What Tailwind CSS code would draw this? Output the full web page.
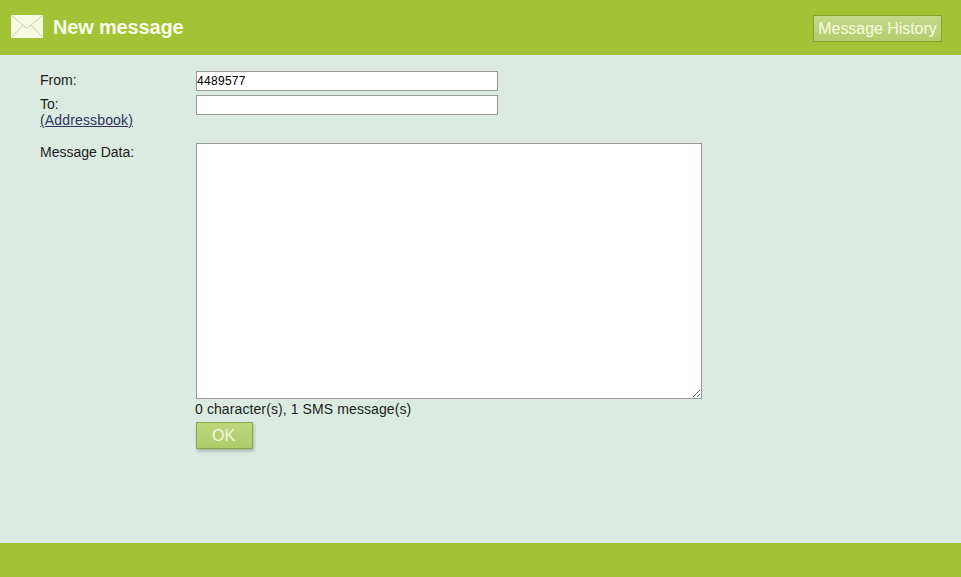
<!DOCTYPE html>
<html lang="en">
<head>
  <meta charset="UTF-8">
  <title>New message</title>
  <script src="https://cdn.jsdelivr.net/npm/@tailwindcss/browser@4"></script>
</head>
<body class="bg-[#dbebe1] font-['Liberation_Sans',Arial,sans-serif] text-[14px] text-[#1c1c1c]">
  <div class="flex flex-col h-[577px] overflow-hidden">
    <!-- Header -->
    <header class="h-[55px] bg-[#a3c236] flex items-center pl-[11px] pr-[19px]">
      <svg width="32" height="23" viewBox="0 0 32 23" class="mr-[10px] -mt-[2px]">
        <rect width="32" height="23" fill="#f7fbe6"/>
        <path d="M0.5 0.5 L16 13.5 L31.5 0.5 M0.5 22.5 L12 10 M31.5 22.5 L20 10" fill="none" stroke="#c6d29c" stroke-width="1"/>
      </svg>
      <h1 class="text-[20px] font-bold text-[#f7fce8] flex-1 tracking-[-0.17px] -mt-[1px]">New message</h1>
      <a href="#" class="h-[27px] w-[129px] flex items-center justify-center text-[16px] text-[#f8fde0] border border-[#84a02f] bg-gradient-to-b from-[#c5d88a] to-[#b4cc6c] mt-[2px] tracking-[-0.05px]">Message History</a>
    </header>

    <!-- Form -->
    <main class="flex-1 pl-[40px] pt-[16px]">
      <div class="flex h-[24px]">
        <label class="w-[156px] leading-[18px]">From:</label>
        <input type="text" value="4489577" class="w-[302px] h-[20px] bg-white border border-[#999] px-0 text-[12px] text-black tracking-[0.3px] font-['Liberation_Sans',Arial,sans-serif]">
      </div>
      <div class="flex h-[48px]">
        <div class="w-[156px] leading-[16px] pt-[1px]">
          <div>To:</div>
          <a href="#" class="text-[#32335e] underline tracking-[0.15px]">(Addressbook)</a>
        </div>
        <input type="text" class="w-[302px] h-[20px] bg-white border border-[#999]">
      </div>
      <div class="flex">
        <label class="w-[156px] leading-[18px]">Message Data:</label>
        <div>
          <textarea class="block w-[506px] h-[256px] bg-white border border-[#999]"></textarea>
          <div class="mt-[1px] -ml-[1px] leading-[18px] tracking-[0.1px]">0 character(s), 1 SMS message(s)</div>
          <button class="mt-[4px] w-[57px] h-[27px] pr-[2px] text-[16px] text-[#f3f8dc] border border-[#8fa64e] bg-gradient-to-b from-[#bfd67e] to-[#b0ca68] shadow-[1px_2px_3px_rgba(0,0,0,0.25)]">OK</button>
        </div>
      </div>
    </main>

    <!-- Footer -->
    <footer class="h-[34px] bg-[#a3c236]"></footer>
  </div>
</body>
</html>
